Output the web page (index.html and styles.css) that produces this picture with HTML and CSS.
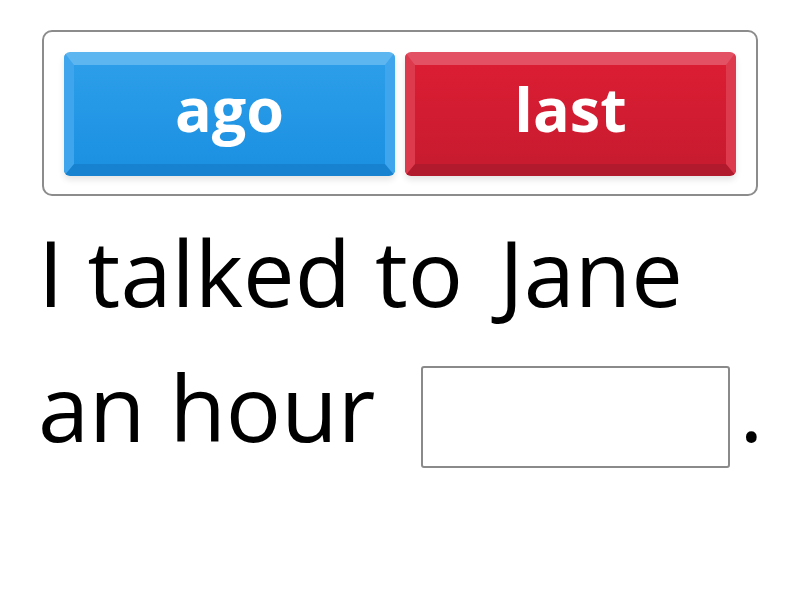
FILE: index.html
```html
<!DOCTYPE html>
<html lang="en">
<head>
<meta charset="utf-8">
<title>Fill the gap</title>
<link rel="stylesheet" href="styles.css">
</head>
<body>
  <main class="activity">
    <div class="tray">
      <div class="tile tile-blue">ago</div>
      <div class="tile tile-red">last</div>
    </div>
    <div class="sentence">
      <div class="line">I talked to <span class="word-gap">Jane</span></div>
      <div class="line">an hour <span class="blank"></span><span class="stop">.</span></div>
    </div>
  </main>
</body>
</html>
```

FILE: styles.css
```css
html, body {
  margin: 0;
  padding: 0;
  background: #fff;
}

.activity {
  padding: 30px 0 0 38px;
  font-family: "Open Sans", "Liberation Sans", sans-serif;
}

.tray {
  box-sizing: border-box;
  width: 716px;
  height: 166px;
  margin-left: 4px;
  padding: 20px 20px 18px 20px;
  border: 2px solid #8c8c8c;
  border-radius: 10px;
  display: flex;
  gap: 10px;
}

.tile {
  flex: 1;
  box-sizing: border-box;
  height: 124px;
  border-style: solid;
  border-width: 13px 10px 12px 10px;
  border-radius: 6px;
  color: #fff;
  font-weight: 700;
  font-size: 61px;
  display: flex;
  align-items: center;
  justify-content: center;
  padding-bottom: 13px;
  box-shadow: 0 4px 6px rgba(0, 0, 0, 0.10);
}

.tile-blue {
  background: linear-gradient(#2c9ee9, #1c91e2);
  border-color: #5db6f0 #3fa6ed #1782cf #3fa6ed;
}

.tile-red {
  background: linear-gradient(#db1d33, #c81b2f);
  border-color: #e25264 #dd3a4d #b01a2c #dd3a4d;
}

.sentence {
  margin-top: 8px;
  font-size: 92px;
  line-height: 135px;
  color: #000;
  white-space: nowrap;
}

.word-gap {
  margin-left: 12px;
}

.blank {
  display: inline-block;
  box-sizing: border-box;
  width: 309px;
  height: 102px;
  margin-left: 22px;
  margin-right: 9px;
  border: 2px solid #8a8a8a;
  border-radius: 3px;
  vertical-align: middle;
}
```
